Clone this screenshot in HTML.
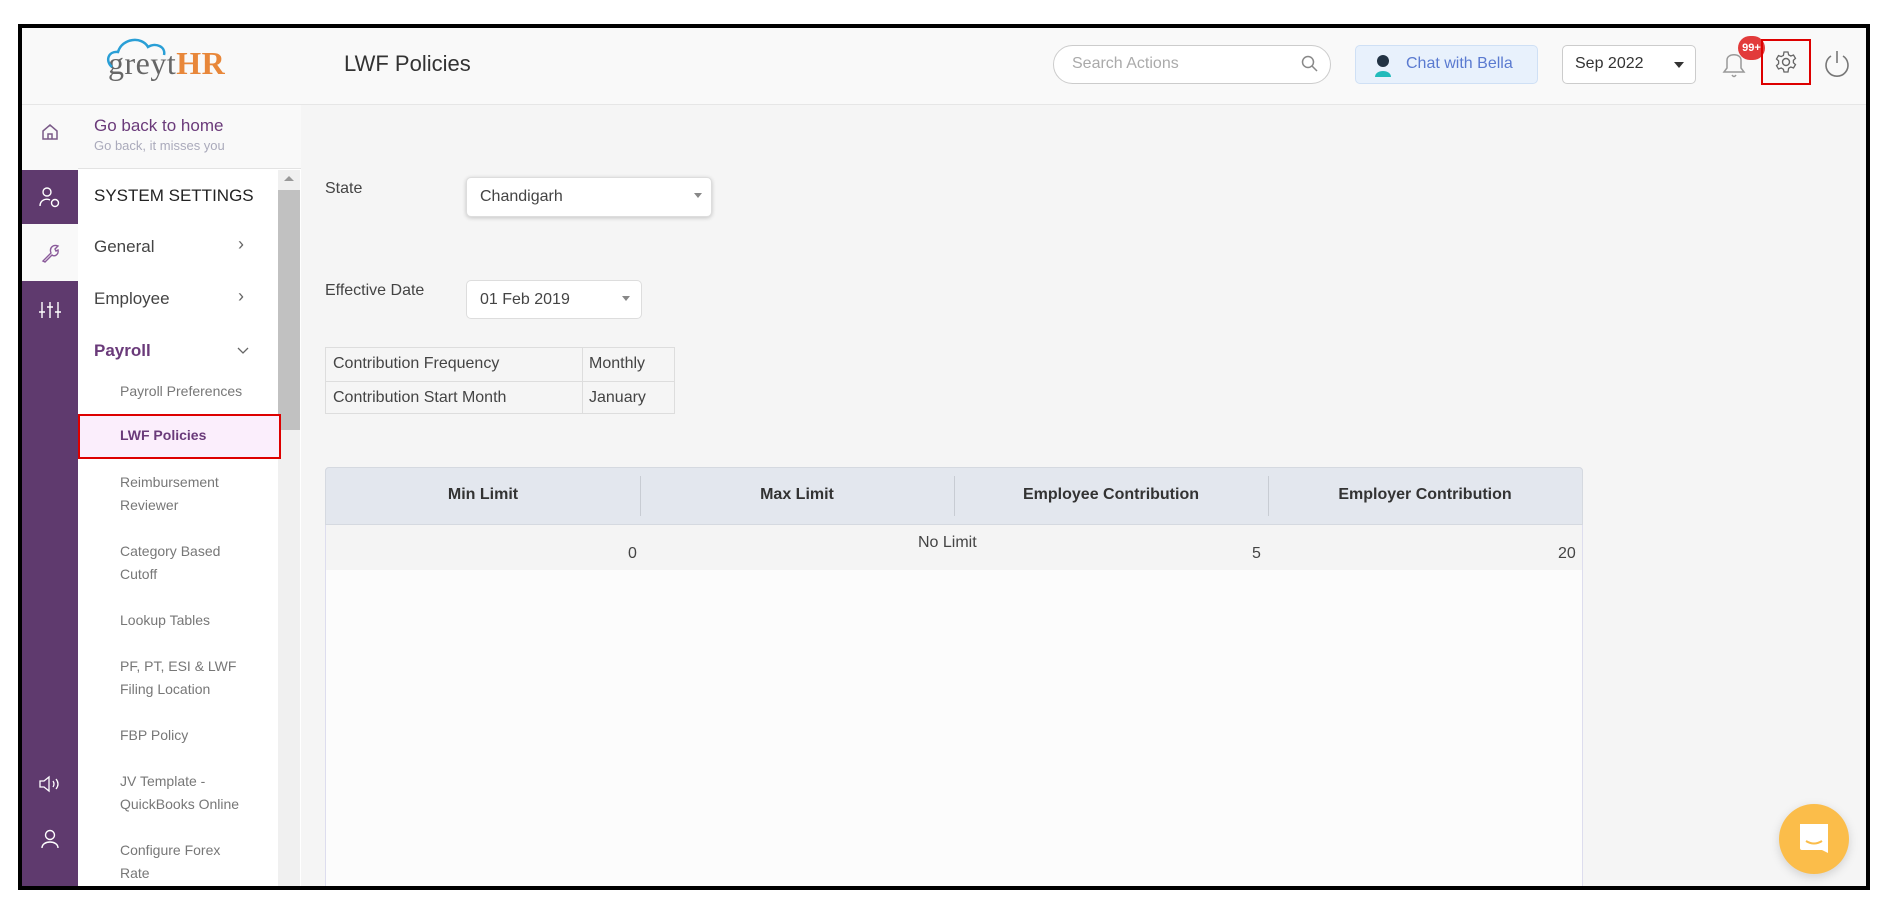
<!DOCTYPE html>
<html><head><meta charset="utf-8"><style>
*{box-sizing:border-box;margin:0;padding:0}
body{width:1893px;height:910px;background:#fff;font-family:"Liberation Sans",sans-serif;position:relative;overflow:hidden;color:#333}
.a{position:absolute}
#frame{left:18px;top:24px;width:1852px;height:866px;border:4px solid #000;overflow:hidden;background:#f5f5f5}
</style></head><body>
<div id="frame" class="a">
<div class="a" style="left:0;top:0;width:1848px;height:77px;background:#f9f9f9;border-bottom:1px solid #e6e6e6"></div>
<div class="a" style="left:86px;top:17px;font-family:'Liberation Serif',serif;font-size:32px;color:#666;letter-spacing:0.5px">greyt<span style="color:#e8873a;font-weight:bold">HR</span></div>
<svg class="a" style="left:80px;top:5px" width="110" height="40"><path d="M10 34 C3 28 6 18 16 19 C20 5 40 3 46 14 C54 9 64 14 62 22" fill="none" stroke="#2a9fd6" stroke-width="2.5"/></svg>
<div class="a" style="left:322px;top:23px;font-size:22px;color:#333">LWF Policies</div>
<div class="a" style="left:1031px;top:17px;width:278px;height:39px;border:1px solid #ccc;border-radius:20px;background:#fff;font-size:16px;color:#aaa;padding:9px 18px">Search Actions</div>
<svg class="a" style="left:1279px;top:27px" width="18" height="18"><circle cx="7" cy="7" r="5.5" fill="none" stroke="#888" stroke-width="1.5"/><path d="M11 11l5 5" stroke="#888" stroke-width="1.5"/></svg>
<div class="a" style="left:1333px;top:17px;width:183px;height:39px;border:1px solid #cfe0f5;border-radius:5px;background:#e8f1fc;font-size:16px;color:#5a7ad0;padding:9px 0 0 50px">Chat with Bella</div>
<svg class="a" style="left:1351px;top:25px" width="20" height="24"><circle cx="10" cy="8" r="6" fill="#234"/><path d="M2 24c0-8 16-8 16 0z" fill="#2bb"/></svg>
<div class="a" style="left:1540px;top:17px;width:134px;height:39px;border:1px solid #ccc;border-radius:5px;background:#fff;font-size:16px;color:#333;padding:9px 12px">Sep 2022</div>
<div class="a" style="left:1652px;top:34px;border:5px solid transparent;border-top:6px solid #333"></div>
<svg class="a" style="left:1698px;top:18px" width="28" height="36"><path d="M4 26 L7 22 L7 14 C7 7 21 7 21 14 L21 22 L24 26 Z M12 29 q2 3 4 0" fill="none" stroke="#999" stroke-width="1.5"/></svg>
<div class="a" style="left:1716px;top:8px;width:27px;height:24px;border-radius:12px;background:#e23b3b;color:#fff;font-size:11px;font-weight:bold;text-align:center;line-height:24px">99+</div>
<div class="a" style="left:1739px;top:11px;width:50px;height:46px;border:2px solid #d00"></div>
<svg class="a" style="left:1752px;top:22px" width="24" height="24" viewBox="0 0 24 24"><circle cx="12" cy="12" r="3.5" fill="none" stroke="#666" stroke-width="1.4"/><path d="M10 2h4l.6 2.8 2.2 1.2 2.7-1 2 3.4-2.1 1.9v2.4l2.1 1.9-2 3.4-2.7-1-2.2 1.3L14 22h-4l-.6-2.7-2.2-1.3-2.7 1-2-3.4 2.1-1.9V10.9L2.5 9l2-3.4 2.7 1 2.2-1.2z" fill="none" stroke="#666" stroke-width="1.3"/></svg>
<svg class="a" style="left:1800px;top:20px" width="30" height="30"><path d="M9 8 A11 11 0 1 0 21 8" fill="none" stroke="#777" stroke-width="1.6"/><path d="M15 3v12" stroke="#777" stroke-width="1.6"/></svg>

<div class="a" style="left:0;top:77px;width:56px;height:790px;background:#f9f9f9"></div>
<div class="a" style="left:0;top:142px;width:56px;height:54px;background:#5f3a6e"></div>
<div class="a" style="left:0;top:253px;width:56px;height:620px;background:#5f3a6e"></div>
<svg class="a" style="left:18px;top:94px" width="20" height="20"><path d="M3 9 L10 3 L17 9 V17 H3 Z M8 17 V12 H12 V17" fill="none" stroke="#7a5a88" stroke-width="1.5"/></svg>
<svg class="a" style="left:16px;top:158px" width="24" height="24"><circle cx="9" cy="6" r="4" fill="none" stroke="#fff" stroke-width="1.4"/><path d="M2 20c0-6 6-8 10-6" fill="none" stroke="#fff" stroke-width="1.4"/><circle cx="17" cy="17" r="3.5" fill="none" stroke="#fff" stroke-width="1.4"/></svg>
<svg class="a" style="left:17px;top:214px" width="22" height="22"><path d="M4 19 L12 11 C10 6 14 2 19 4 L16 7 L17 9 L19 8 C20 13 15 15 13 13 L6 20 Z" fill="none" stroke="#8a5a9a" stroke-width="1.4"/></svg>
<svg class="a" style="left:16px;top:272px" width="24" height="20"><path d="M4 2v16M12 2v16M20 2v16M1 12h6M9 7h6M17 12h6" stroke="#fff" stroke-width="1.4"/></svg>
<svg class="a" style="left:16px;top:746px" width="24" height="20"><path d="M2 7h4l5-4v14l-5-4H2z M15 7q2 3 0 6 M18 5q4 5 0 10" fill="none" stroke="#fff" stroke-width="1.3"/></svg>
<svg class="a" style="left:18px;top:800px" width="20" height="22"><circle cx="10" cy="7" r="4.5" fill="none" stroke="#fff" stroke-width="1.4"/><path d="M2 20c0-8 16-8 16 0" fill="none" stroke="#fff" stroke-width="1.4"/></svg>

<div class="a" style="left:56px;top:77px;width:223px;height:790px;background:#fff"></div>
<div class="a" style="left:56px;top:77px;width:223px;height:64px;background:#f9f9f9;border-bottom:1px solid #e3e3e3"></div>
<div class="a" style="left:72px;top:88px;font-size:17px;color:#6a3a7a">Go back to home</div>
<div class="a" style="left:72px;top:110px;font-size:13px;color:#aab">Go back, it misses you</div>
<div class="a" style="left:256px;top:142px;width:22px;height:730px;background:#f0f0f0"></div>
<div class="a" style="left:256px;top:162px;width:22px;height:240px;background:#c1c1c1"></div>
<div class="a" style="left:262px;top:148px;border:5px solid transparent;border-bottom:5px solid #999;border-top:0"></div>
<div class="a" style="left:262px;top:860px;border:5px solid transparent;border-top:5px solid #555;border-bottom:0"></div>
<div class="a" style="left:72px;top:158px;font-size:17px;color:#222">SYSTEM SETTINGS</div>
<div class="a" style="left:72px;top:209px;font-size:17px;color:#444">General</div><div class="a" style="left:216px;top:206px;font-size:18px;color:#666">&#8250;</div>
<div class="a" style="left:72px;top:261px;font-size:17px;color:#444">Employee</div><div class="a" style="left:216px;top:258px;font-size:18px;color:#666">&#8250;</div>
<div class="a" style="left:72px;top:313px;font-size:17px;color:#6a3a7a;font-weight:bold">Payroll</div>
<svg class="a" style="left:214px;top:318px" width="14" height="10"><path d="M2 2l5 5 5-5" fill="none" stroke="#666" stroke-width="1.3"/></svg>
<div class="a" style="left:56px;top:386px;width:203px;height:45px;background:#fbeefc;border:2px solid #d00"></div>
<div style="position:absolute;left:98px;top:-3px;font-size:14px;color:#777;line-height:23px">
<div class="a" style="top:355px;left:0;white-space:nowrap">Payroll Preferences</div>
<div class="a" style="top:399px;left:0;white-space:nowrap;color:#6a3a7a;font-weight:bold">LWF Policies</div>
<div class="a" style="top:446px;left:0;white-space:nowrap">Reimbursement<br>Reviewer</div>
<div class="a" style="top:515px;left:0;white-space:nowrap">Category Based<br>Cutoff</div>
<div class="a" style="top:584px;left:0;white-space:nowrap">Lookup Tables</div>
<div class="a" style="top:630px;left:0;white-space:nowrap">PF, PT, ESI &amp; LWF<br>Filing Location</div>
<div class="a" style="top:699px;left:0;white-space:nowrap">FBP Policy</div>
<div class="a" style="top:745px;left:0;white-space:nowrap">JV Template -<br>QuickBooks Online</div>
<div class="a" style="top:814px;left:0;white-space:nowrap">Configure Forex<br>Rate</div>
</div>

<div class="a" style="left:303px;top:152px;font-size:16px;color:#444">State</div>
<div class="a" style="left:444px;top:149px;width:246px;height:40px;background:#fff;border:1px solid #ddd;border-radius:5px;box-shadow:0 1px 4px rgba(0,0,0,.2);font-size:16px;color:#444;padding:10px 13px">Chandigarh</div>
<div class="a" style="left:672px;top:165px;border:4px solid transparent;border-top:5px solid #888"></div>
<div class="a" style="left:303px;top:254px;font-size:16px;color:#444">Effective Date</div>
<div class="a" style="left:444px;top:252px;width:176px;height:39px;background:#fff;border:1px solid #ddd;border-radius:5px;font-size:16px;color:#444;padding:10px 13px">01 Feb 2019</div>
<div class="a" style="left:600px;top:268px;border:4px solid transparent;border-top:5px solid #888"></div>
<div class="a" style="left:303px;top:319px;width:350px;height:67px;border:1px solid #ddd;background:#f5f5f5;font-size:16px;color:#444">
<div class="a" style="left:0;top:33px;width:348px;border-top:1px solid #ddd"></div>
<div class="a" style="left:256px;top:0;height:65px;border-left:1px solid #ddd"></div>
<div class="a" style="left:7px;top:7px">Contribution Frequency</div><div class="a" style="left:263px;top:7px">Monthly</div>
<div class="a" style="left:7px;top:41px">Contribution Start Month</div><div class="a" style="left:263px;top:41px">January</div>
</div>
<div class="a" style="left:303px;top:439px;width:1258px;height:440px;background:#fcfcfc;border:1px solid #dde;border-radius:4px"></div>
<div class="a" style="left:303px;top:439px;width:1258px;height:58px;background:#e3e7ee;border:1px solid #d5d9e0;border-radius:4px 4px 0 0;font-size:16px;color:#333;font-weight:bold">
<div class="a" style="left:0;width:314px;top:18px;text-align:center">Min Limit</div>
<div class="a" style="left:314px;width:314px;top:18px;text-align:center">Max Limit</div>
<div class="a" style="left:628px;width:314px;top:18px;text-align:center">Employee Contribution</div>
<div class="a" style="left:942px;width:314px;top:18px;text-align:center">Employer Contribution</div>
<div class="a" style="left:314px;top:8px;height:40px;border-left:1px solid #c8ccd3"></div>
<div class="a" style="left:628px;top:8px;height:40px;border-left:1px solid #c8ccd3"></div>
<div class="a" style="left:942px;top:8px;height:40px;border-left:1px solid #c8ccd3"></div>
</div>
<div class="a" style="left:304px;top:497px;width:1256px;height:45px;background:#f4f4f4;font-size:16px;color:#444">
<div class="a" style="left:302px;top:20px">0</div>
<div class="a" style="left:592px;top:9px">No Limit</div>
<div class="a" style="left:926px;top:20px">5</div>
<div class="a" style="left:1232px;top:20px">20</div>
</div>
<div class="a" style="left:1757px;top:776px;width:70px;height:70px;border-radius:50%;background:#fbbd4a;box-shadow:0 3px 10px rgba(0,0,0,.15)"></div>
<svg class="a" style="left:1774px;top:793px" width="36" height="36"><path d="M4 3h28v29l-6-3H6a2 2 0 0 1-2-2z" fill="#fff"/><path d="M10 20q8 5 16 0" fill="none" stroke="#fbbd4a" stroke-width="2"/></svg>
</div>
</body></html>
